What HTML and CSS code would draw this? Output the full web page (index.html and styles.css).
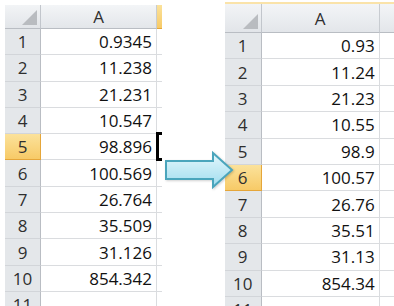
FILE: index.html
```html
<!DOCTYPE html>
<html lang="en">
<head>
  <meta charset="UTF-8">
  <meta name="viewport" content="width=device-width, initial-scale=1.0">
  <title>Redondeo de decimales</title>
  <link rel="stylesheet" href="styles.css">
</head>
<body>
  <div class="page">

    <!-- hoja original -->
    <div class="sheet sheet-before">
      <div class="corner"></div>
      <div class="col-head">A</div>
      <div class="col-head active"></div>

      <div class="row-head">1</div><div class="cell">0.9345</div><div class="cell"></div>
      <div class="row-head">2</div><div class="cell">11.238</div><div class="cell"></div>
      <div class="row-head">3</div><div class="cell">21.231</div><div class="cell"></div>
      <div class="row-head">4</div><div class="cell">10.547</div><div class="cell"></div>
      <div class="row-head active">5</div><div class="cell">98.896</div><div class="cell selected"></div>
      <div class="row-head">6</div><div class="cell">100.569</div><div class="cell"></div>
      <div class="row-head">7</div><div class="cell">26.764</div><div class="cell"></div>
      <div class="row-head">8</div><div class="cell">35.509</div><div class="cell"></div>
      <div class="row-head">9</div><div class="cell">31.126</div><div class="cell"></div>
      <div class="row-head">10</div><div class="cell">854.342</div><div class="cell"></div>
      <div class="row-head">11</div><div class="cell"></div><div class="cell"></div>
    </div>

    <!-- hoja redondeada -->
    <div class="sheet sheet-after">
      <div class="corner"></div>
      <div class="col-head">A</div>
      <div class="col-head"></div>

      <div class="row-head">1</div><div class="cell">0.93</div><div class="cell"></div>
      <div class="row-head">2</div><div class="cell">11.24</div><div class="cell"></div>
      <div class="row-head">3</div><div class="cell">21.23</div><div class="cell"></div>
      <div class="row-head">4</div><div class="cell">10.55</div><div class="cell"></div>
      <div class="row-head">5</div><div class="cell">98.9</div><div class="cell"></div>
      <div class="row-head active">6</div><div class="cell">100.57</div><div class="cell"></div>
      <div class="row-head">7</div><div class="cell">26.76</div><div class="cell"></div>
      <div class="row-head">8</div><div class="cell">35.51</div><div class="cell"></div>
      <div class="row-head">9</div><div class="cell">31.13</div><div class="cell"></div>
      <div class="row-head">10</div><div class="cell">854.34</div><div class="cell"></div>
      <div class="row-head">11</div><div class="cell"></div><div class="cell"></div>
    </div>

    <svg class="arrow" width="74" height="40" viewBox="0 0 74 40">
      <defs>
        <linearGradient id="arrow-fill" x1="0" y1="0" x2="0" y2="1">
          <stop offset="0" stop-color="#e4f7fc"/>
          <stop offset="1" stop-color="#9fdcee"/>
        </linearGradient>
      </defs>
      <path d="M4 11 H51 V3 L70 20 L51 37 V29 H4 Z" fill="url(#arrow-fill)" stroke="#4aa5bc" stroke-width="2" stroke-linejoin="miter"/>
    </svg>
  </div>
</body>
</html>
```

FILE: styles.css
```css
body {
  margin: 0;
  padding: 0;
  background-color: #fff;
  font-family: 'Open Sans', 'Liberation Sans', sans-serif;
  overflow: hidden;
}

.page {
  position: relative;
  display: flex;
  align-items: flex-start;
  height: 306px;
  overflow: hidden;
}

.sheet {
  display: grid;
  overflow: hidden;
  font-size: 17px;
  color: #111;
}

.sheet-before {
  margin: 5px 0 0 5px;
  height: 301px;
  grid-template-columns: 36px 116px 10px;
  grid-template-rows: 24px;
  grid-auto-rows: 26.3px;
}

.sheet-after {
  margin: 2px 0 0 63px;
  height: 304px;
  border-top: 2px solid #fae3a9;
  grid-template-columns: 37px 118px 20px;
  grid-template-rows: 29px;
  grid-auto-rows: 26.4px;
}

.corner,
.col-head,
.row-head {
  box-sizing: border-box;
  display: flex;
  align-items: center;
  justify-content: center;
  color: #2f2f2f;
}

.corner {
  position: relative;
  background: linear-gradient(#f2f4f6, #e2e5e9);
  border-right: 1px solid #c2c6cc;
  border-bottom: 1px solid #b9bdc3;
}

.corner::after {
  content: '';
  position: absolute;
  right: 3px;
  bottom: 3px;
  border-style: solid;
  border-width: 0 0 15px 15px;
  border-color: transparent transparent #b9bcc0 transparent;
}

.col-head {
  background: linear-gradient(#f3f5f7, #e3e6ea);
  border-right: 1px solid #c8ccd1;
  border-bottom: 1px solid #b9bdc3;
}

.row-head {
  background-color: #e4e7ea;
  border-right: 1px solid #b9bdc3;
  border-bottom: 1px solid #d2d5d9;
}

.col-head.active,
.row-head.active {
  background: linear-gradient(#fbe29b, #f7ca67);
  border-right-color: #e5a63a;
  border-bottom-color: #e5a63a;
}

.cell {
  position: relative;
  box-sizing: border-box;
  display: flex;
  align-items: center;
  justify-content: flex-end;
  padding-right: 4px;
  background-color: #fff;
  border-right: 1px solid #dadcdf;
  border-bottom: 1px solid #dadcdf;
}

.cell.selected {
  z-index: 1;
}

.cell.selected::after {
  content: '';
  position: absolute;
  left: -1px;
  top: -2px;
  right: -6px;
  bottom: -2px;
  border: 3px solid #000;
}

.arrow {
  position: absolute;
  z-index: 2;
  left: 162px;
  top: 150px;
  filter: drop-shadow(1px 1px 1px rgba(0, 0, 0, 0.18));
}
```
